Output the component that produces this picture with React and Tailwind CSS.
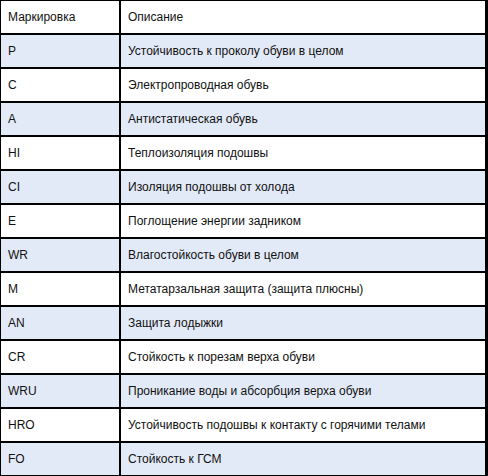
const rows = [
  ["P", "Устойчивость к проколу обуви в целом"],
  ["C", "Электропроводная обувь"],
  ["A", "Антистатическая обувь"],
  ["HI", "Теплоизоляция подошвы"],
  ["CI", "Изоляция подошвы от холода"],
  ["E", "Поглощение энергии задником"],
  ["WR", "Влагостойкость обуви в целом"],
  ["M", "Метатарзальная защита (защита плюсны)"],
  ["AN", "Защита лодыжки"],
  ["CR", "Стойкость к порезам верха обуви"],
  ["WRU", "Проникание воды и абсорбция верха обуви"],
  ["HRO", "Устойчивость подошвы к контакту с горячими телами"],
  ["FO", "Стойкость к ГСМ"],
];

function Row({ code, text, blue }) {
  const bg = blue ? "bg-[#e3eaf7]" : "bg-white";
  return (
    <div className={`grid grid-cols-[120px_1fr] h-[34px] ${bg}`}>
      <div className="border border-black flex items-center pl-[7px]">{code}</div>
      <div className="border border-black flex items-center pl-[7px]">{text}</div>
    </div>
  );
}

export default function App() {
  return (
    <div
      className="w-[488px] h-[476px] bg-white text-[12px] text-[#111] overflow-hidden"
      style={{ fontFamily: '"Liberation Sans", Arial, sans-serif' }}
    >
      <div className="w-[488px] border-r-2 border-black">
        <Row code="Маркировка" text="Описание" blue={false} />
        {rows.map(([code, text], i) => (
          <Row key={code} code={code} text={text} blue={i % 2 === 0} />
        ))}
      </div>
    </div>
  );
}
